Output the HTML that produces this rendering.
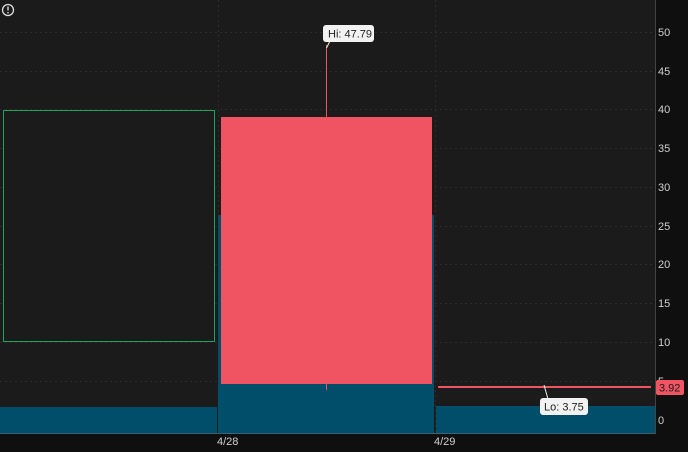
<!DOCTYPE html>
<html><head><meta charset="utf-8"><style>
html,body{margin:0;padding:0;background:#0f0f10;width:688px;height:452px;overflow:hidden}
svg{display:block}
text{font-family:"Liberation Sans",sans-serif}
</style></head><body>
<svg width="688" height="452" viewBox="0 0 688 452" shape-rendering="crispEdges">
<rect x="0" y="0" width="688" height="452" fill="#0f0f10"/>
<rect x="0" y="0" width="655" height="433" fill="#1b1b1c"/>
<g stroke="#2c2c2e" stroke-width="1" stroke-dasharray="2,3">
<line x1="0" y1="32.5" x2="655" y2="32.5"/>
<line x1="0" y1="71.5" x2="655" y2="71.5"/>
<line x1="0" y1="109.5" x2="655" y2="109.5"/>
<line x1="0" y1="148.5" x2="655" y2="148.5"/>
<line x1="0" y1="187.5" x2="655" y2="187.5"/>
<line x1="0" y1="226.5" x2="655" y2="226.5"/>
<line x1="0" y1="264.5" x2="655" y2="264.5"/>
<line x1="0" y1="303.5" x2="655" y2="303.5"/>
<line x1="0" y1="342.5" x2="655" y2="342.5"/>
<line x1="0" y1="381.5" x2="655" y2="381.5"/>
<line x1="218.5" y1="0" x2="218.5" y2="433"/>
<line x1="435.5" y1="0" x2="435.5" y2="433"/>
</g>
<!-- volume -->
<rect x="0" y="407" width="217" height="26" fill="#004e6a"/>
<rect x="218" y="215" width="216" height="218" fill="#004e6a"/>
<rect x="436" y="406" width="219" height="27" fill="#004e6a"/>
<rect x="0" y="433" width="655" height="1" fill="#3d6070"/>
<!-- green candle -->
<rect x="3" y="110" width="212" height="232" fill="#1fa35c"/>
<rect x="4" y="111" width="210" height="230" fill="#1b1b1c"/>
<!-- red candle -->
<rect x="326" y="45" width="1" height="345" fill="#f05463"/>
<rect x="221" y="117" width="211" height="267" fill="#f05463"/>
<!-- last price line -->
<rect x="438" y="386" width="213" height="2" fill="#f05463"/>
<!-- axis -->
<rect x="655" y="0" width="1" height="434" fill="#444"/>
<g fill="#cfcfcf" font-size="11" shape-rendering="auto">
<text x="658" y="36">50</text>
<text x="658" y="75">45</text>
<text x="658" y="113">40</text>
<text x="658" y="152">35</text>
<text x="658" y="191">30</text>
<text x="658" y="230">25</text>
<text x="658" y="268">20</text>
<text x="658" y="307">15</text>
<text x="658" y="346">10</text>
<text x="658" y="385">5</text>
<text x="658" y="424">0</text>
<text x="217" y="445">4/28</text>
<text x="434" y="445">4/29</text>
</g>
<rect x="656" y="380" width="28" height="15" rx="2" fill="#f05463"/>
<text x="659" y="391.5" font-size="11" fill="#1b1b1c">3.92</text>
<g shape-rendering="auto">
<line x1="326.5" y1="48" x2="330" y2="41" stroke="#eee" stroke-width="1"/>
<rect x="323" y="25" width="51" height="17" rx="3" fill="#f2f2f2"/>
<text x="328" y="37.5" font-size="11" fill="#222">Hi: 47.79</text>
<line x1="544" y1="385" x2="548" y2="399" stroke="#eee" stroke-width="1"/>
<rect x="540" y="398" width="48" height="17" rx="3" fill="#f2f2f2"/>
<text x="544" y="410.5" font-size="11" fill="#222">Lo: 3.75</text>
<circle cx="8" cy="10" r="5.5" fill="none" stroke="#ddd" stroke-width="1.3"/>
<line x1="8" y1="6.5" x2="8" y2="10.5" stroke="#ddd" stroke-width="1.4"/>
<circle cx="8" cy="12.7" r="0.8" fill="#ddd"/>
</g>
</svg>
</body></html>
